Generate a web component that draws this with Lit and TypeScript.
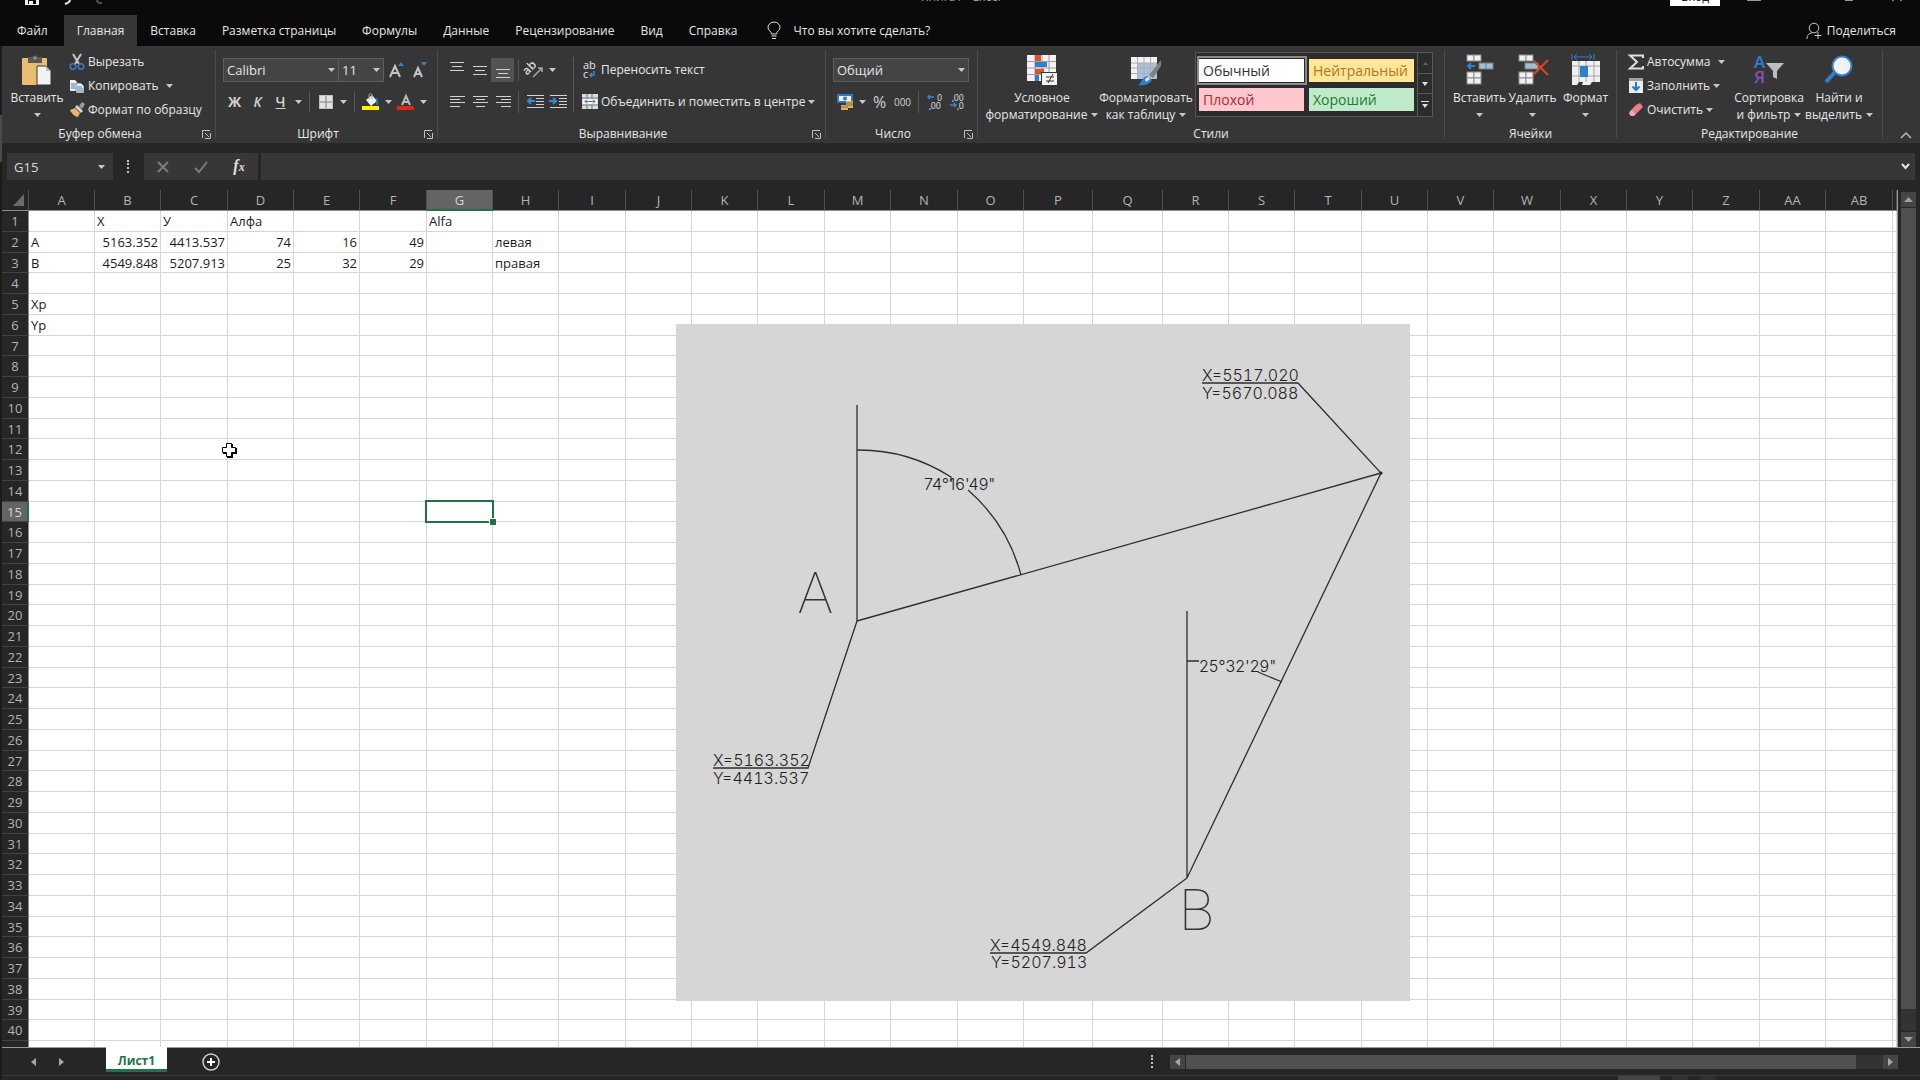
import { LitElement, html, css, svg, nothing, TemplateResult } from "lit";
import { customElement, property } from "lit/decorators.js";
import { classMap } from "lit/directives/class-map.js";

const icon = (w: number, h: number, body: TemplateResult) =>
  html`<svg class="icon" width=${w} height=${h} viewBox="0 0 ${w} ${h}" aria-hidden="true">${body}</svg>`;

const arrow = () => icon(7, 4, svg`<path d="M0 0h7L3.500 4z" fill="#c8c8c8"/>`);

/* Horizontal text lines used by all the alignment icons. */
const bars = (list: number[][]) =>
  svg`${list.map(([x, y, w]) => svg`<rect x=${x} y=${y} width=${w} height="1" fill="#d2d2d2"/>`)}`;

const cellsBlock = (x: number, y: number, cols: number, rows: number) => {
  const out: TemplateResult[] = [];
  for (let r = 0; r < rows; r++)
    for (let c = 0; c < cols; c++)
      out.push(svg`<rect x=${x + c * 7} y=${y + r * 6} width="7" height="6" fill="#f0f0f0" stroke="#8c8c8c"/>`);
  return svg`${out}`;
};

const I = {
  paste: icon(32, 32, svg`<rect x="1" y="4" width="25" height="27" rx="1" fill="#e8bd72"/><path d="M7 3h4a3.500 3.500 0 0 1 6 0h4v6H7z" fill="#585858"/><circle cx="14" cy="4" r="1.500" fill="#999"/><path d="M16 12h9l5 5v14H16z" fill="#f2f2f2" stroke="#363636"/><path d="M25 12v5h5z" fill="#bdbdbd"/>`),
  cut: icon(16, 16, svg`<path d="M4 0l6 10M12 0L6 10" stroke="#c9c9c9" stroke-width="2" fill="none"/><circle cx="4" cy="12.500" r="2.800" fill="none" stroke="#3f78bb" stroke-width="1.500"/><circle cx="12" cy="12.500" r="2.800" fill="none" stroke="#3f78bb" stroke-width="1.500"/>`),
  copy: icon(16, 16, svg`<path d="M1 2h5l3 3v8H1z" fill="#f0f0f0"/><path d="M2 6h4M2 8h4M2 10h4" stroke="#3c83c8"/><path d="M7 5h5l3 3v7H7z" fill="#f0f0f0" stroke="#363636" stroke-width=".6"/><path d="M8 9h5M8 11h6M8 13h6" stroke="#3c83c8"/>`),
  brush: icon(16, 16, svg`<path d="M1 8l5-2 5 5-2 4c-3 0-6-3-8-7z" fill="#e4b56a"/><path d="M6 5l2-2 6 6-2 2z" fill="#d8d8d8"/><path d="M10 4l3-4 3 2-3 5z" fill="#9b9b9b"/>`),
  grow: icon(18, 18, svg`<path d="M2 16L7 5l5 11M4 12h6" stroke="#c4c4c4" stroke-width="2" fill="none"/><path d="M10 5l3-4 3 4z" fill="#3f7ec4"/>`),
  shrink: icon(18, 18, svg`<path d="M3 16L7 7l4 9M4 13h6" stroke="#c4c4c4" stroke-width="2" fill="none"/><path d="M10 1h6l-3 4z" fill="#3f7ec4"/>`),
  borders: icon(14, 14, svg`<rect width="14" height="14" fill="#e2e2e2"/><path d="M7 1v12M1 7h12" stroke="#7a7a7a"/><rect x=".5" y=".5" width="13" height="13" fill="none" stroke="#bdbdbd"/>`),
  fill: icon(18, 18, svg`<path d="M4 7l6-5 5 6-6 5z" fill="#f0f0f0"/><path d="M7 6V2a1.500 1.500 0 0 1 3 0v4" stroke="#9a9a9a" fill="none"/><path d="M14 5c2 0 3 3 2 7-2 0-3-1-2-3z" fill="#2f6fb5"/><rect x="0" y="13" width="17" height="4" fill="#fff100"/>`),
  fontColor: icon(18, 18, svg`<path d="M5 12L9 3l4 9M6 9h6" stroke="#b9b9b9" stroke-width="2" fill="none"/><rect x="0" y="13" width="17" height="4" fill="#e02613"/>`),
  top: icon(16, 16, bars([[1, 0, 14], [3, 4, 10], [1, 8, 14]])),
  mid: icon(16, 16, bars([[1, 4, 14], [3, 8, 10], [1, 12, 14]])),
  bottom: icon(16, 16, bars([[1, 7, 14], [3, 11, 10], [1, 15, 14]])),
  left: icon(16, 16, bars([[1, 2, 15], [1, 5, 10], [1, 8, 15], [1, 12, 10]])),
  center: icon(16, 16, bars([[1, 2, 15], [4, 5, 9], [1, 8, 15], [4, 12, 9]])),
  right: icon(16, 16, bars([[1, 2, 15], [6, 5, 10], [1, 8, 15], [6, 12, 10]])),
  outdent: icon(18, 16, svg`${bars([[1, 1, 17], [10, 4, 8], [10, 7, 8], [10, 10, 8], [1, 13, 17]])}<path d="M9 7H2M5 4L2 7l3 3" stroke="#3a86d6" stroke-width="2" fill="none"/>`),
  indent: icon(18, 16, svg`${bars([[1, 1, 17], [10, 4, 8], [10, 7, 8], [10, 10, 8], [1, 13, 17]])}<path d="M0 7h7M4 4l3 3-3 3" stroke="#3a86d6" stroke-width="2" fill="none"/>`),
  orient: icon(18, 18, svg`<text x="-3" y="9" transform="rotate(-45 6 7)" font-family="Open Sans, sans-serif" font-size="12" font-weight="600" fill="#d6d6d6">ab</text><path d="M7 16L16 7M12 7h4v4" stroke="#a9a9a9" stroke-width="1.500" fill="none"/>`),
  wrap: icon(16, 18, svg`<text x="1" y="8" font-family="Open Sans, sans-serif" font-size="11" fill="#e4e4e4">ab</text><text x="1" y="17" font-family="Open Sans, sans-serif" font-size="11" fill="#e4e4e4">c</text><path d="M12 10v4H8M10 12l-2 2 2 2" stroke="#3a86d6" stroke-width="1.500" fill="none"/>`),
  merge: icon(16, 16, svg`<rect x="0" y="0" width="16" height="15" fill="#dcdcdc"/><path d="M5 0v4M10 0v4M5 11v4M10 11v4M0 4h16M0 11h16" stroke="#777"/><rect x="1" y="5" width="14" height="5" fill="#f4f4f4"/><path d="M3 7.500h10M5 5.500l-2 2 2 2M11 5.500l2 2-2 2" stroke="#2b7cd3" fill="none"/>`),
  money: icon(18, 18, svg`<rect x="1" y="1" width="16" height="9" fill="#2e79c4"/><rect x="3" y="3" width="12" height="5" fill="#f0f0f0"/><circle cx="9" cy="5.500" r="2" fill="#2e79c4"/><path d="M10 8h7v7h-7z" fill="#e3b165"/><path d="M5 12h7v5H5z" fill="#e3b165"/><path d="M10 10h7M10 12h7M5 14h7" stroke="#8b6a38"/>`),
  incDec: icon(18, 18, svg`<g font-family="Roboto, sans-serif" font-size="9" fill="#d6d6d6"><text x="11" y="8">0</text><text x="3" y="16">,00</text></g><path d="M8 4H2M4 2L2 4l2 2" stroke="#3a86d6" stroke-width="1.500" fill="none"/>`),
  decDec: icon(18, 18, svg`<g font-family="Roboto, sans-serif" font-size="9" fill="#d6d6d6"><text x="3" y="8">,00</text><text x="8" y="16">,0</text></g><path d="M1 12h6M5 10l2 2-2 2" stroke="#3a86d6" stroke-width="1.500" fill="none"/>`),
  cond: icon(32, 32, svg`<rect x="1" y="1" width="29" height="26" fill="#f2f2f2"/><path d="M1 7.500h29M1 14h29M1 20.500h29M9 1v26M16 1v26M23 1v26" stroke="#a0a0a0"/><rect x="9" y="1" width="6" height="6" fill="#dc5428"/><rect x="9" y="8" width="12" height="5" fill="#2f7fd0"/><rect x="9" y="15" width="9" height="5" fill="#dc5428"/><rect x="9" y="21" width="4" height="6" fill="#2f7fd0"/><rect x="15.500" y="18.500" width="16" height="13" fill="#f4f4f4" stroke="#363636"/><path d="M20 23h8M20 27h8M27 20l-5 9" stroke="#333" fill="none"/>`),
  formatTable: icon(32, 32, svg`<rect x="1" y="3" width="26" height="22" fill="#f2f2f2"/><rect x="8" y="9" width="19" height="16" fill="#a9c0d6"/><path d="M1 9h26M1 14h26M1 19.500h26M7.500 3v22M14 3v22M20.500 3v22" stroke="#a8b0b8"/><path d="M31 6v6l-8 12-4-3z" fill="#808080"/><path d="M8 31c3-1 4-8 9-9l5 4c-2 4-7 6-14 5z" fill="#2f7fd0"/><path d="M15 25l3-2 2 2-4 3z" fill="#e8e8e8"/>`),
  insert: icon(32, 32, svg`${cellsBlock(3, 1, 2, 1)}<rect x="15" y="9" width="14" height="6" fill="#a8bccd" stroke="#6f7f8e"/><path d="M22 9v6" stroke="#6f7f8e"/>${cellsBlock(3, 18, 2, 2)}<path d="M11 12H4M7 9l-3 3 3 3" stroke="#2f7fd0" stroke-width="2" fill="none"/>`),
  remove: icon(32, 32, svg`${cellsBlock(2, 1, 2, 1)}<rect x="8" y="9" width="13" height="6" fill="#a8bccd" stroke="#6f7f8e"/>${cellsBlock(2, 18, 2, 2)}<path d="M17 7l14 14M31 6L16 21" stroke="#d9481c" stroke-width="2" fill="none"/>`),
  format: icon(32, 32, svg`<path d="M2 0v6M24 0v6M4 3h18M7 0L4 3l3 3M19 0l3 3-3 3" stroke="#2f7fd0" fill="none"/><path d="M2 7h28v21h-8l-2 3h-8l1-3H9l-2 3H2z" fill="#f0f0f0"/><path d="M2 12h28M2 22h28M9 7v21M16 7v21M24 7v21" stroke="#a5a5a5"/><rect x="10" y="12" width="8" height="11" fill="#2f7fd0"/>`),
  sum: icon(16, 16, svg`<path d="M15 4V1.500H2L9 8l-7 6.500h13V12" fill="none" stroke="#dedede" stroke-width="2"/>`),
  fillDown: icon(16, 16, svg`<rect x="1" y="0" width="14" height="15" fill="#ececec"/><rect x="1" y="0" width="14" height="3" fill="#a3a3a3"/><path d="M8 4v8M4.500 8.500L8 12l3.500-3.500" stroke="#2878c8" stroke-width="2" fill="none"/>`),
  erase: icon(16, 16, svg`<path d="M8 3l4-2 3 4-7 7-5-4z" fill="#ee7a8c"/><path d="M2 9l2-1 4 4-2 2H3l-2-2z" fill="#f3a9b4"/>`),
  sort: icon(32, 32, svg`<g font-family="Open Sans, sans-serif" font-size="17" font-weight="600"><text x="1" y="14" fill="#2f7fd0">А</text><text x="1" y="29" fill="#8b4fae">Я</text></g><path d="M13 9h18l-7 8v8l-4-2v-6z" fill="#bdbdbd"/>`),
  find: icon(32, 32, svg`<path d="M3 28L12 18" stroke="#2f7fd0" stroke-width="4"/><circle cx="19" cy="12" r="9.500" fill="#f2f2f2" stroke="#2f7fd0" stroke-width="2"/>`),
  launcher: icon(9, 9, svg`<path d="M.5 8V.5H8M3 3l4 4M8.500 3v5.500H3" stroke="#c0c0c0" fill="none"/>`),
  bulb: icon(14, 18, svg`<path d="M4.500 12c0-3-3.500-3-3.500-6.500a6 5.500 0 0 1 12 0C13 9 9.500 9 9.500 12z" fill="none" stroke="#e0e0e0"/><path d="M4.500 14h5M5 16.500h4" stroke="#e0e0e0"/>`),
  share: icon(17, 18, svg`<circle cx="8" cy="6" r="4.800" fill="none" stroke="#c8c8c8"/><path d="M1 17c0-4 2-6 5-6M12 10v7M8.500 13.500h7" stroke="#c8c8c8" fill="none"/>`),
  chevUp: icon(12, 8, svg`<path d="M1 7l5-5 5 5" stroke="#b8b8b8" stroke-width="1.500" fill="none"/>`),
  chevDown: icon(9, 7, svg`<path d="M1 1l3.500 4L8 1" stroke="#e8e8e8" stroke-width="2" fill="none"/>`),
  cancel: icon(14, 14, svg`<path d="M2 2l10 10M12 2L2 12" stroke="#7c7c7c" stroke-width="2" fill="none"/>`),
  accept: icon(14, 14, svg`<path d="M1 8l4 4 8-10" stroke="#7c7c7c" stroke-width="2" fill="none"/>`),
  dots: icon(3, 13, svg`<path d="M0 0h2v2H0zM0 3h2v2H0zM0 7h2v2H0zM0 11h2v2H0z" fill="#c4c4c4"/>`),
  triLeft: icon(5, 8, svg`<path d="M5 0v8L0 4z" fill="#a8a8a8"/>`),
  triRight: icon(5, 8, svg`<path d="M0 0v8l5-4z" fill="#a8a8a8"/>`),
  triUp: icon(9, 5, svg`<path d="M0 5h9L4.500 0z" fill="#a0a0a0"/>`),
  triDown: icon(9, 5, svg`<path d="M0 0h9L4.500 5z" fill="#a0a0a0"/>`),
  plus: icon(18, 18, svg`<circle cx="9" cy="9" r="8" fill="none" stroke="#d0d0d0" stroke-width="1.500"/><path d="M9 5v8M5 9h8" stroke="#fff" stroke-width="2"/>`),
};

const base = css`
  * { box-sizing: border-box; }
  button, select, input {
    font: inherit;
    color: inherit;
    background: none;
    border: 0;
    border-radius: 0;
    margin: 0;
    padding: 0;
    outline: 0;
  }
  button { white-space: nowrap; }
  .icon { display: block; flex: none; overflow: visible; }
`;

@customElement("title-strip")
export class TitleStrip extends LitElement {
  static styles = [base, css`
    :host { display: grid; grid-template: 6px / 1fr auto 1fr; height: 6px; overflow: hidden; align-items: end; }
    .quick { display: flex; gap: 22px; padding-left: 22px; align-items: end; }
    .title { line-height: 16px; color: #9a9a9a; padding-bottom: 1px; }
    .end { display: flex; justify-content: flex-end; gap: 26px; padding-right: 18px; align-items: end; }
    .signin { background: #fff; color: #222; width: 50px; height: 22px; line-height: 16px; padding-top: 4px; }
  `];
  render() {
    return html`
      <div class="quick">
        <button aria-label="Сохранить">${icon(16, 6, svg`<path d="M1 0h14v5H1z" fill="#f0f0f0"/><path d="M4 0h8v4H4z" fill="#0a0a0a"/><path d="M5 1h4v3H5z" fill="#f0f0f0"/>`)}</button>
        <button aria-label="Отменить">${icon(12, 6, svg`<path d="M8 0c0 2-2 3-5 4" stroke="#e6e6e6" stroke-width="2" fill="none"/>`)}</button>
        <button aria-label="Вернуть">${icon(8, 6, svg`<path d="M1 0c0 2 2 3 5 3" stroke="#555" stroke-width="2" fill="none"/>`)}</button>
      </div>
      <div class="title">Книга1 - Excel</div>
      <div class="end">
        <button class="signin">Вход</button>
        ${icon(156, 6, svg`<path d="M1 .5h14M99 .5h8M146 0l2 1M156 0l-2 1" stroke="#9a9a9a" fill="none"/>`)}
      </div>`;
  }
}

@customElement("menu-tabs")
export class MenuTabs extends LitElement {
  static styles = [base, css`
    :host { display: flex; height: 40px; align-items: flex-end; }
    nav { display: flex; padding-left: 2px; }
    .tab { height: 31px; padding: 0 13px; line-height: 31px; }
    .tab:first-child { padding-right: 16px; }
    .active { background: #363636; }
    .ask { display: flex; align-items: center; gap: 13px; height: 31px; margin-left: 16px; }
    .share { display: flex; align-items: center; gap: 4px; height: 31px; margin-left: auto; padding-right: 24px; }
  `];
  render() {
    const tabs = ["Файл", "Главная", "Вставка", "Разметка страницы", "Формулы", "Данные", "Рецензирование", "Вид", "Справка"];
    return html`
      <nav>${tabs.map((t, i) => html`<button class=${classMap({ tab: true, active: i === 1 })}>${t}</button>`)}</nav>
      <button class="ask">${I.bulb}<span>Что вы хотите сделать?</span></button>
      <button class="share">${I.share}<span>Поделиться</span></button>`;
  }
}

@customElement("ribbon-bar")
export class RibbonBar extends LitElement {
  static styles = [base, css`
    :host { display: flex; height: 97px; background: #363636; }
    .group { display: flex; flex-direction: column; flex: none; }
    .clipboard { width: 213px; }
    .font { width: 221px; }
    .align { width: 387px; }
    .number { width: 151px; }
    .styles { width: 466px; }
    .cells { width: 171px; }
    .editing { width: 265px; }
    .body { display: flex; height: 79px; }
    .foot { display: flex; align-items: center; height: 18px; }
    .name { flex: 1; text-align: center; line-height: 16px; }
    .launch { display: flex; width: 17px; justify-content: center; }
    .rule { width: 1px; margin: 4px 0 5px; background: #4c4c4c; flex: none; }
    .split { width: 1px; height: 22px; margin: 0 4px 0 5px; background: #565656; }
    .split.near { margin: 0 4px; }
    .tall { width: 1px; height: 56px; margin: 11px 0 0 4px; background: #565656; }
    .big { display: flex; flex-direction: column; align-items: center; padding-top: 8px; line-height: 17px; }
    .big .text { margin-top: 3px; }
    .line { display: flex; align-items: center; justify-content: center; gap: 4px; height: 17px; }
    .w-paste { width: 64px; margin-left: 3px; }
    .w-cond { width: 116px; margin-left: 6px; }
    .w-table { width: 92px; }
    .w-cell { width: 53px; }
    .w-edit { width: 70px; }
    .list { display: flex; flex-direction: column; padding-top: 4px; }
    .item { display: flex; align-items: center; gap: 3px; height: 24px; }
    .item .wide { margin-left: 5px; }
    .rows { display: flex; flex-direction: column; gap: 8px; padding: 12px 0 0 7px; }
    .row { display: flex; align-items: center; height: 24px; }
    .tool { display: flex; align-items: center; justify-content: center; width: 23px; height: 24px; color: #d2d2d2; }
    .drop { display: flex; align-items: center; justify-content: center; width: 12px; height: 24px; }
    .on { background: #535353; }
    .bold { font-weight: 700; font-size: 14px; }
    .italic { font-weight: 600; font-style: italic; font-size: 14px; }
    .under { font-weight: 600; text-decoration: underline; font-size: 14px; }
    .percent { font-size: 16px; }
    .thousand { font-size: 10px; }
    .combo { display: grid; align-items: center; height: 24px; background: #444; border: 1px solid #5d5d5d; }
    .combo > * { grid-area: 1 / 1; }
    .combo select { appearance: none; width: 100%; height: 22px; padding-left: 3px; font-size: 13px; }
    .combo .icon { justify-self: end; margin-right: 3px; pointer-events: none; }
    .w-font { width: 116px; }
    .w-size { width: 46px; margin: 0 1px 0 -1px; }
    .w-num { width: 136px; }
    .texts { display: flex; flex-direction: column; gap: 8px; padding: 12px 0 0 8px; }
    .cell-first { margin-left: 8px; }
    .edit-list { width: 106px; margin-left: 11px; }
    .gallery { display: flex; margin: 6px 0 0 3px; height: 65px; width: 238px; border: 1px solid #585858; background: #2c2c2c; }
    .chips { display: grid; grid-template-columns: 110px 110px; grid-template-rows: 29px 29px; padding: 3px 0 0 1px; flex: 1; }
    .chip { text-align: left; padding-left: 4px; font-size: 14px; border: 3px solid #2c2c2c; border-left-width: 2px; line-height: 20px; }
    .chip.picked { outline: 2px solid #8a8a8a; outline-offset: -2px; }
    .normal { background: #fff; color: #333; }
    .neutral { background: #ffe699; color: #b0771c; }
    .bad { background: #ffc7ce; color: #b02a35; }
    .good { background: #c0ebcb; color: #1c7a34; }
    .scroll { display: grid; grid-template-rows: 21px 20px 1fr; width: 15px; border-left: 1px solid #585858; }
    .scroll button { display: flex; flex-direction: column; gap: 2px; align-items: center; justify-content: center; border-bottom: 1px solid #585858; }
    .scroll button:last-child { border-bottom: 0; }
    .fold { display: flex; margin: auto 8px 4px auto; }
  `];

  private group(cls: string, name: string, body: unknown, launcher = false) {
    return html`
      <section class="group ${cls}" aria-label=${name}>
        <div class="body">${body}</div>
        <div class="foot"><span class="name">${name}</span>${launcher ? html`<button class="launch" aria-label="Параметры: ${name}">${I.launcher}</button>` : nothing}</div>
      </section>
      <div class="rule"></div>`;
  }
  private tool(label: string, content: unknown, cls = "") {
    return html`<button class="tool ${cls}" aria-label=${label}>${content}</button>`;
  }
  private drop(label: string) {
    return html`<button class="drop" aria-label="${label}, варианты">${arrow()}</button>`;
  }
  private big(cls: string, pic: unknown, first: string, second = "") {
    return html`<button class="big ${cls}">${pic}
      <span class="text"><span class="line">${first}</span><span class="line">${second}${arrow()}</span></span></button>`;
  }
  private item(pic: unknown, text: string, caret = "") {
    return html`<button class="item">${pic}<span>${text}</span>${caret ? html`<span class=${caret}>${arrow()}</span>` : nothing}</button>`;
  }
  private combo(cls: string, label: string, value: string) {
    return html`<span class="combo ${cls}"><select aria-label=${label}><option>${value}</option></select>${arrow()}</span>`;
  }

  render() {
    const split = html`<span class="split"></span>`;
    const near = html`<span class="split near"></span>`;
    return html`
      ${this.group("clipboard", "Буфер обмена", html`
        ${this.big("w-paste", I.paste, "Вставить")}
        <div class="list">${this.item(I.cut, "Вырезать")}${this.item(I.copy, "Копировать", "wide")}${this.item(I.brush, "Формат по образцу")}</div>`, true)}
      ${this.group("font", "Шрифт", html`
        <div class="rows">
          <div class="row">${this.combo("w-font", "Шрифт", "Calibri")}${this.combo("w-size", "Размер", "11")}
            ${this.tool("Увеличить размер шрифта", I.grow)}${this.tool("Уменьшить размер шрифта", I.shrink)}</div>
          <div class="row">${this.tool("Полужирный", "Ж", "bold")}${this.tool("Курсив", "К", "italic")}${this.tool("Подчеркнутый", "Ч", "under")}${this.drop("Подчеркнутый")}
            ${split}${this.tool("Границы", I.borders)}${this.drop("Границы")}
            ${split}${this.tool("Цвет заливки", I.fill)}${this.drop("Цвет заливки")}${this.tool("Цвет шрифта", I.fontColor)}${this.drop("Цвет шрифта")}</div>
        </div>`, true)}
      ${this.group("align", "Выравнивание", html`
        <div class="rows">
          <div class="row">${this.tool("По верхнему краю", I.top)}${this.tool("По середине", I.mid)}${this.tool("По нижнему краю", I.bottom, "on")}
            ${near}${this.tool("Ориентация", I.orient)}${this.drop("Ориентация")}</div>
          <div class="row">${this.tool("По левому краю", I.left)}${this.tool("По центру", I.center)}${this.tool("По правому краю", I.right)}
            ${near}${this.tool("Уменьшить отступ", I.outdent)}${this.tool("Увеличить отступ", I.indent)}</div>
        </div>
        <div class="tall"></div>
        <div class="texts">${this.item(I.wrap, "Переносить текст")}${this.item(I.merge, "Объединить и поместить в центре", "tight")}</div>`, true)}
      ${this.group("number", "Число", html`
        <div class="rows">
          <div class="row">${this.combo("w-num", "Числовой формат", "Общий")}</div>
          <div class="row">${this.tool("Финансовый формат", I.money)}${this.drop("Финансовый формат")}${this.tool("Процентный формат", "%", "percent")}${this.tool("Формат с разделителями", "000", "thousand")}
            ${near}${this.tool("Увеличить разрядность", I.incDec)}${this.tool("Уменьшить разрядность", I.decDec)}</div>
        </div>`, true)}
      ${this.group("styles", "Стили", html`
        ${this.big("w-cond", I.cond, "Условное", "форматирование")}
        ${this.big("w-table", I.formatTable, "Форматировать", "как таблицу")}
        <div class="gallery">
          <div class="chips">
            <button class="chip normal picked">Обычный</button><button class="chip neutral">Нейтральный</button>
            <button class="chip bad">Плохой</button><button class="chip good">Хороший</button>
          </div>
          <div class="scroll">
            <button aria-label="Стили вверх">${icon(5, 3, svg`<path d="M0 3h5L2.500 0z" fill="#666"/>`)}</button>
            <button aria-label="Стили вниз">${icon(6, 4, svg`<path d="M0 0h6L3 4z" fill="#e0e0e0"/>`)}</button>
            <button aria-label="Все стили">${icon(8, 8, svg`<path d="M0 0h8v1H0zM1 3h6L4 7z" fill="#e0e0e0"/>`)}</button>
          </div>
        </div>`)}
      ${this.group("cells", "Ячейки", html`
        ${this.big("w-cell cell-first", I.insert, "Вставить")}${this.big("w-cell", I.remove, "Удалить")}${this.big("w-cell", I.format, "Формат")}`)}
      ${this.group("editing", "Редактирование", html`
        <div class="list edit-list">${this.item(I.sum, "Автосумма", "wide")}${this.item(I.fillDown, "Заполнить", "tight")}${this.item(I.erase, "Очистить", "tight")}</div>
        ${this.big("w-edit", I.sort, "Сортировка", "и фильтр")}${this.big("w-edit", I.find, "Найти и", "выделить")}`)}
      <button class="fold" aria-label="Свернуть ленту">${I.chevUp}</button>`;
  }
}

@customElement("formula-bar")
export class FormulaBar extends LitElement {
  static styles = [base, css`
    :host { display: flex; align-items: stretch; height: 47px; padding: 10px 5px 10px 5px; }
    .box { display: flex; align-items: center; background: #373737; }
    .namebox { width: 106px; }
    .namebox input { flex: 1; min-width: 0; padding-left: 7px; font-size: 13px; color: #dcdcdc; }
    .namebox button { width: 23px; display: flex; justify-content: center; }
    .grip { display: flex; align-items: center; justify-content: center; width: 31px; }
    .keys { width: 114px; }
    .keys button { display: flex; justify-content: center; width: 38px; }
    .fx { font: italic 700 16px/20px "Liberation Serif", serif; color: #e0e0e0; align-items: baseline; }
    .sub { font-size: 12px; }
    .entry { flex: 1; margin-left: 3px; }
    .entry input { flex: 1; min-width: 0; height: 27px; padding: 0 6px; }
    .entry button { width: 20px; display: flex; justify-content: center; }
  `];
  render() {
    return html`
      <div class="box namebox"><input aria-label="Имя ячейки" .value=${"G15"} /><button aria-label="Список имён">${arrow()}</button></div>
      <div class="grip">${I.dots}</div>
      <div class="box keys">
        <button aria-label="Отмена">${I.cancel}</button><button aria-label="Ввод">${I.accept}</button>
        <button class="fx" aria-label="Вставить функцию"><span>f</span><span class="sub">x</span></button>
      </div>
      <div class="box entry"><input aria-label="Строка формул" /><button aria-label="Развернуть строку формул">${I.chevDown}</button></div>`;
  }
}

@customElement("survey-drawing")
export class SurveyDrawing extends LitElement {
  static styles = css`
    :host { display: block; background: #d6d6d6; }
    svg { display: block; }
    .line { fill: none; stroke: #2e2e2e; stroke-width: 1.3; }
    .angle { font: 300 16px Inter, sans-serif; fill: #222; }
    .coord { font: 300 16px Inter, sans-serif; font-variant-numeric: tabular-nums; fill: #222; }
    .mark { font: 100 58px Roboto, sans-serif; fill: #333; }
  `;
  render() {
    const labels: [string, number, number, string][] = [
      ["coord", 1202, 381, "X=5517.020"], ["coord", 1202, 399, "Y=5670.088"],
      ["coord", 713, 766, "X=5163.352"], ["coord", 713, 784, "Y=4413.537"],
      ["coord", 990, 951, "X=4549.848"], ["coord", 991, 968, "Y=5207.913"],
      ["angle", 924, 490, "74°16'49\""], ["angle", 1199, 672, "25°32'29\""],
    ];
    return html`
      <svg width="734" height="677" viewBox="676 324 734 677" role="img" aria-label="Схема угловой засечки">
        <path class="line" d="M857 405V621M857 450A171 171 0 0 1 951 477V482M968 490A171 171 0 0 1 1021 575M857 621L1381 473"/>
        <path class="line" d="M1202 383H1298L1381 473L1187 878V611M1187 661H1199M1258 672L1282 682"/>
        <path class="line" d="M857 621L808 768H713M1187 878L1086 953H990"/>
        <circle cx="1381" cy="473" r="1.500" fill="#222"/>
        ${labels.map(([cls, x, y, t]) => svg`<text class=${cls} x=${x} y=${y}>${t}</text>`)}
        <text class="mark" x="798" y="613">A</text>
        <text class="mark" x="1179" y="930">B</text>
      </svg>`;
  }
}

const COLUMNS: [string, number][] = [
  ["A", 66], ["B", 66], ["C", 67], ["D", 66], ["E", 66], ["F", 67], ["G", 66], ["H", 66], ["I", 67], ["J", 66],
  ["K", 66], ["L", 67], ["M", 66], ["N", 67], ["O", 66], ["P", 69], ["Q", 70], ["R", 66], ["S", 66], ["T", 67],
  ["U", 66], ["V", 66], ["W", 67], ["X", 66], ["Y", 66], ["Z", 67], ["AA", 66], ["AB", 67],
];
const CELLS: Record<string, string | number> = {
  B1: "X", C1: "У", D1: "Алфа", G1: "Alfa",
  A2: "A", B2: "5163.352", C2: "4413.537", D2: 74, E2: 16, F2: 49, H2: "левая",
  A3: "B", B3: "4549.848", C3: "5207.913", D3: 25, E3: 32, F3: 29, H3: "правая",
  A5: "Xp", A6: "Yp",
};

@customElement("sheet-grid")
export class SheetGrid extends LitElement {
  @property() active = "G15";
  static styles = [base, css`
    :host { display: block; position: relative; overflow: hidden; background: #fff; border-right: 1px solid #9a9a9a; }
    table { table-layout: fixed; width: 100%; border-spacing: 0; font-size: 13px; line-height: 18px; color: #1c1c1c; }
    th, td { padding: 0; height: 21px; overflow: hidden; white-space: nowrap; }
    .r20 th, .r20 td { height: 20px; }
    .corner { width: 27px; }
    th { background: #262626; color: #b4b4b4; font-weight: 400; }
    thead th { border-right: 1px solid #505050; border-bottom: 1px solid #8c8c8c; }
    thead th.hot { background: #646464; color: #d4d4d4; border-bottom: 2px solid #217346; }
    tbody th { border-right: 1px solid #8c8c8c; border-bottom: 1px solid #424242; }
    tbody th.hot { background: #646464; color: #d4d4d4; border-right: 2px solid #217346; }
    td { border-right: 1px solid #d6d6d6; border-bottom: 1px solid #d6d6d6; padding: 0 2px; }
    td.num { text-align: right; }
    .select-all { padding-left: 11px; }
    td.active { position: relative; overflow: visible; }
    .ring { position: absolute; inset: -2px; border: 2px solid #217346; }
    .ring::after { content: ""; position: absolute; right: -4px; bottom: -4px; width: 6px; height: 6px; background: #217346; border: 1px solid #fff; border-width: 1px 0 0 1px; }
    survey-drawing { position: absolute; left: 674px; top: 134px; }
    .pointer { position: absolute; left: 219px; top: 252px; }
  `];
  render() {
    const rows = Array.from({ length: 41 }, (_, i) => i + 1);
    return html`
      <table aria-label="Лист1">
        <colgroup><col class="corner" />${COLUMNS.map(([, w]) => html`<col style="width:${w}px" />`)}<col /></colgroup>
        <thead><tr>
          <th class="select-all">${icon(11, 12, svg`<path d="M11 0v12H0z" fill="#6a6a6a"/>`)}</th>
          ${COLUMNS.map(([n]) => html`<th scope="col" class=${n === "G" ? "hot" : ""}>${n}</th>`)}<th></th>
        </tr></thead>
        <tbody>${rows.map((r) => html`<tr class=${r % 4 === 3 ? "r20" : ""}>
          <th scope="row" class=${r === 15 ? "hot" : ""}>${r <= 40 ? r : nothing}</th>
          ${COLUMNS.map(([n]) => {
            const key = n + r;
            const v = CELLS[key];
            const num = v !== undefined && !isNaN(Number(v));
            return html`<td class=${classMap({ num, active: key === this.active })}>${v ?? nothing}${key === this.active ? html`<span class="ring"></span>` : nothing}</td>`;
          })}<td></td></tr>`)}</tbody>
      </table>
      <survey-drawing></survey-drawing>
      <svg class="pointer" width="17" height="17" viewBox="0 0 17 17" aria-hidden="true">
        <path d="M6 2h6v4h4v6h-4v4H6v-4H2V6h4z" fill="#000"/>
        <path d="M5.500 1.500h5v4h4v5h-4v4h-5v-4h-4v-5h4z" fill="#fff" stroke="#000"/>
      </svg>`;
  }
}

@customElement("app-root")
export class AppRoot extends LitElement {
  static styles = [base, css`
    :host {
      display: flex;
      flex-direction: column;
      height: 100vh;
      overflow: hidden;
      background: #262626;
      color: #e6e6e6;
      font: 12px/16px "Open Sans", "Noto Sans", sans-serif;
    }
    .head { background: #0a0a0a; padding-left: 2px; }
    .shell { display: flex; flex: 1; min-height: 0; }
    .edge { width: 2px; background: linear-gradient(#1b1b1b 69px, #4a4a4a 69px, #4a4a4a 116px, #1b1b1b 116px); }
    .main { display: flex; flex-direction: column; flex: 1; min-width: 0; }
    .work { display: flex; flex: 1; min-height: 0; border-bottom: 1px solid #9a9a9a; }
    sheet-grid { flex: 1; min-width: 0; }
    .vbar { display: flex; flex-direction: column; width: 22px; padding: 2px 4px 0 3px; }
    .step { display: flex; align-items: center; justify-content: center; background: #454545; flex: none; }
    .vbar .step { height: 15px; }
    .vtrack { flex: 1; margin: 1px 0; background: #333; padding-bottom: 22px; display: flex; }
    .thumb { flex: 1; background: #505050; }
    .tabs { display: flex; align-items: center; height: 28px; border-bottom: 1px solid #3c3c3c; padding-right: 22px; }
    .nav { display: flex; justify-content: center; width: 28px; }
    .nav:first-child { margin-left: 17px; }
    .sheet { align-self: flex-start; height: 25px; margin: -1px 35px 0 31px; padding-top: 5px; width: 61px; background: #fff; color: #217346; font-weight: 700; border-bottom: 3px solid #217346; position: relative; }
    .more { margin-left: auto; margin-right: 16px; }
    .hbar { display: flex; width: calc(38% + 8px); height: 14px; }
    .hbar .step { width: 15px; }
    .htrack { flex: 1; display: flex; margin-left: 1px; background: #333; padding-right: 27px; }
    .status { display: flex; justify-content: flex-end; gap: 12px; height: 4px; padding-right: 204px; }
    .view { width: 16px; background: #303030; }
    .view.current { width: 42px; background: #444; }
  `];
  render() {
    return html`
      <header class="head"><title-strip></title-strip><menu-tabs></menu-tabs></header>
      <div class="shell">
        <div class="edge"></div>
        <main class="main">
          <ribbon-bar></ribbon-bar>
          <formula-bar></formula-bar>
          <div class="work">
            <sheet-grid></sheet-grid>
            <div class="vbar"><button class="step" aria-label="Вверх">${I.triUp}</button><div class="vtrack"><div class="thumb"></div></div><button class="step" aria-label="Вниз">${I.triDown}</button></div>
          </div>
          <div class="tabs">
            <button class="nav" aria-label="Предыдущий лист">${I.triLeft}</button><button class="nav" aria-label="Следующий лист">${I.triRight}</button>
            <button class="sheet">Лист1</button>
            <button aria-label="Новый лист">${I.plus}</button>
            <span class="more">${I.dots}</span>
            <div class="hbar"><button class="step" aria-label="Влево">${I.triLeft}</button><div class="htrack"><div class="thumb"></div></div><button class="step" aria-label="Вправо">${I.triRight}</button></div>
          </div>
          <div class="status"><span class="view current"></span><span class="view"></span><span class="view"></span></div>
        </main>
      </div>`;
  }
}
